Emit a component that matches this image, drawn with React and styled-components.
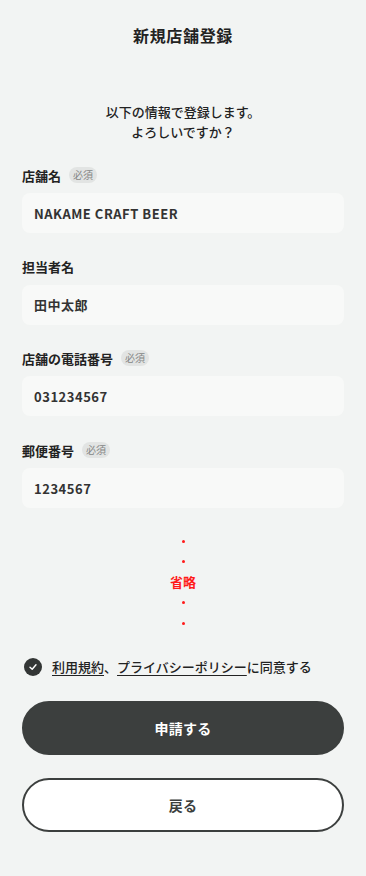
import React from "react";
import styled, { createGlobalStyle } from "styled-components";

const GlobalStyle = createGlobalStyle`
	* {
		box-sizing: border-box;
	}
	html, body {
		margin: 0;
		padding: 0;
		background: #f2f4f3;
	}
	body {
		font-family: "Noto Sans CJK JP", "Noto Sans", sans-serif;
		color: #333;
	}
`;

const fields = [
	{ label: "店舗名", value: "NAKAME CRAFT BEER", required: true },
	{ label: "担当者名", value: "田中太郎", required: false },
	{ label: "店舗の電話番号", value: "031234567", required: true },
	{ label: "郵便番号", value: "1234567", required: true },
];

export default function App() {
	return (
		<>
			<GlobalStyle />
			<Page>
				<Header>新規店舗登録</Header>
				<Message>
					以下の情報で登録します。
					<br />
					よろしいですか？
				</Message>

				<Form>
					{fields.map((f) => (
						<Field key={f.label}>
							<LabelRow>
								<Label>{f.label}</Label>
								{f.required && <Badge>必須</Badge>}
							</LabelRow>
							<Value>{f.value}</Value>
						</Field>
					))}
				</Form>

				<Omitted>
					<Dot />
					<Dot />
					<OmitText>省略</OmitText>
					<Dot />
					<Dot />
				</Omitted>

				<Agree>
					<Check>
						<svg width="10" height="10" viewBox="0 0 10 10">
							<path
								d="M2 5.2 L4.2 7.3 L8 2.8"
								fill="none"
								stroke="#fff"
								strokeWidth="1.4"
								strokeLinecap="round"
								strokeLinejoin="round"
							/>
						</svg>
					</Check>
					<AgreeText>
						<u>利用規約</u>、<u>プライバシーポリシー</u>に同意する
					</AgreeText>
				</Agree>

				<Buttons>
					<Button $primary>申請する</Button>
					<Button>戻る</Button>
				</Buttons>
			</Page>
		</>
	);
}

const Page = styled.main`
	min-height: 876px;
	padding: 0 22px 44px;
	display: flex;
	flex-direction: column;
`;

const Header = styled.h1`
	margin: 0;
	height: 70px;
	display: flex;
	align-items: center;
	justify-content: center;
	font-size: 16px;
	font-weight: 700;
	letter-spacing: 0.04em;
	color: #222;
`;

const Message = styled.p`
	margin: 32px 0 0;
	text-align: center;
	font-size: 13px;
	font-weight: 500;
	line-height: 20px;
	color: #222;
`;

const Form = styled.div`
	margin-top: 23px;
	display: flex;
	flex-direction: column;
	gap: 23.7px;
`;

const Field = styled.div`
	display: flex;
	flex-direction: column;
	gap: 8px;
`;

const LabelRow = styled.div`
	height: 20px;
	display: flex;
	align-items: center;
	gap: 8px;
`;

const Label = styled.span`
	font-size: 13px;
	font-weight: 700;
	color: #222;
`;

const Badge = styled.span`
	height: 16px;
	padding: 0 4px;
	border-radius: 8px;
	background: #e2e4e3;
	color: #858786;
	font-size: 10px;
	line-height: 16px;
`;

const Value = styled.div`
	height: 40px;
	padding: 0 12px;
	display: flex;
	align-items: center;
	border-radius: 8px;
	background: #f8f9f8;
	font-size: 13px;
	font-weight: 700;
	letter-spacing: 0.04em;
	color: #333;
`;

const Omitted = styled.div`
	margin-top: 23px;
	display: flex;
	flex-direction: column;
	align-items: center;
	& > * {
		height: 20.5px;
	}
`;

const Dot = styled.span`
	display: flex;
	align-items: center;
	&::before {
		content: "";
		width: 3px;
		height: 3px;
		border-radius: 50%;
		background: #ff1a1a;
	}
`;

const OmitText = styled.span`
	font-size: 13px;
	font-weight: 700;
	line-height: 20.5px;
	color: #ff1a1a;
`;

const Agree = styled.div`
	margin-top: 23px;
	height: 20px;
	padding-left: 2px;
	display: flex;
	align-items: center;
	gap: 10px;
`;

const Check = styled.span`
	width: 18px;
	height: 18px;
	border-radius: 50%;
	background: #333635;
	display: flex;
	align-items: center;
	justify-content: center;
`;

const AgreeText = styled.span`
	font-size: 13px;
	font-weight: 500;
	color: #222;
	u {
		text-underline-offset: 3px;
	}
`;

const Buttons = styled.div`
	margin-top: 24px;
	display: flex;
	flex-direction: column;
	gap: 23px;
`;

const Button = styled.button`
	height: 54px;
	width: 100%;
	border-radius: 27px;
	border: 2px solid #3c3f3e;
	background: ${(p) => (p.$primary ? "#3c3f3e" : "#fff")};
	color: ${(p) => (p.$primary ? "#fff" : "#3c3f3e")};
	font-family: inherit;
	font-size: 14px;
	font-weight: 700;
	letter-spacing: 0.02em;
`;
